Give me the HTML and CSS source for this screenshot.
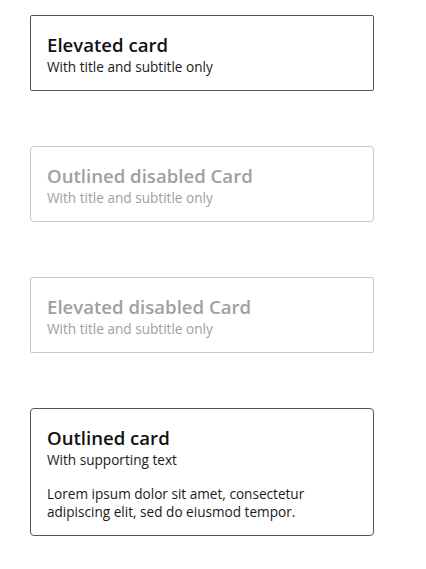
FILE: index.html
```html
<!DOCTYPE html>
<html lang="en">
<head>
<meta charset="utf-8">
<title>Cards</title>
<link rel="stylesheet" href="styles.css">
</head>
<body>
<main class="list">
  <section class="card card-elevated">
    <h2 class="card-title">Elevated card</h2>
    <p class="card-subtitle">With title and subtitle only</p>
  </section>
  <section class="card card-outlined is-disabled">
    <h2 class="card-title">Outlined disabled Card</h2>
    <p class="card-subtitle">With title and subtitle only</p>
  </section>
  <section class="card card-elevated is-disabled">
    <h2 class="card-title">Elevated disabled Card</h2>
    <p class="card-subtitle">With title and subtitle only</p>
  </section>
  <section class="card card-outlined">
    <h2 class="card-title">Outlined card</h2>
    <p class="card-subtitle">With supporting text</p>
    <p class="card-body">Lorem ipsum dolor sit amet, consectetur adipiscing elit, sed do eiusmod tempor.</p>
  </section>
</main>
</body>
</html>
```
FILE: styles.css
```css
html, body {
  margin: 0;
  padding: 0;
  background: #ffffff;
}
body {
  font-family: "Open Sans", "Noto Sans", "Liberation Sans", sans-serif;
  color: #1a1a1a;
}
.list {
  display: flex;
  flex-direction: column;
  gap: 55px;
  padding: 15px 0 0 30px;
}
.card {
  box-sizing: border-box;
  width: 344px;
  padding: 15px 16px;
  border: 1px solid #555555;
  background: #ffffff;
}
.card-elevated {
  border-radius: 2px;
}
.card-outlined {
  border-radius: 4px;
}
.card-title {
  margin: 0;
  font-size: 18.6px;
  line-height: 28px;
  font-weight: 600;
  color: #111111;
}
.card-subtitle {
  margin: 0;
  font-size: 13.6px;
  line-height: 16px;
  font-weight: 400;
  color: #1a1a1a;
}
.card-body {
  margin: 17px 0 -1px 0;
  font-size: 13.6px;
  line-height: 18px;
  color: #1a1a1a;
}
.is-disabled {
  border-color: #c8c8c8;
}
.is-disabled .card-title,
.is-disabled .card-subtitle {
  color: #a0a0a0;
}
```
